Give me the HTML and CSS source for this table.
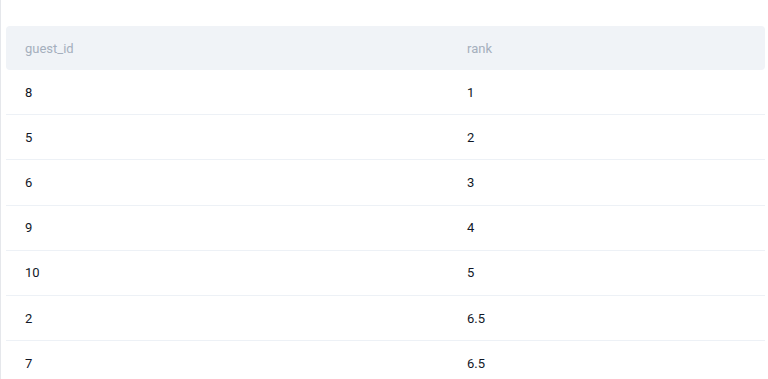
FILE: index.html
```html
<!DOCTYPE html>
<html>
<head>
<meta charset="utf-8">
<link rel="stylesheet" href="styles.css">
</head>
<body>
<div class="frame">
  <table class="grid">
    <thead>
      <tr><th class="c1">guest_id</th><th>rank</th></tr>
    </thead>
    <tbody>
      <tr><td class="c1">8</td><td>1</td></tr>
      <tr><td class="c1">5</td><td>2</td></tr>
      <tr><td class="c1">6</td><td>3</td></tr>
      <tr><td class="c1">9</td><td>4</td></tr>
      <tr><td class="c1">10</td><td>5</td></tr>
      <tr><td class="c1">2</td><td>6.5</td></tr>
      <tr><td class="c1">7</td><td>6.5</td></tr>
    </tbody>
  </table>
</div>
</body>
</html>
```
FILE: styles.css
```css
html, body {
  margin: 0;
  padding: 0;
  background: #ffffff;
  font-family: Roboto, "Noto Sans", sans-serif;
}
.frame {
  border-left: 1px solid #e5e7eb;
  padding: 26px 3px 0 5px;
  height: 379px;
  box-sizing: border-box;
  overflow: hidden;
}
.grid {
  width: 759px;
  border-collapse: separate;
  border-spacing: 0;
  table-layout: fixed;
}
.grid th {
  background: #f0f3f7;
  color: #a5afbd;
  font-weight: 400;
  font-size: 13px;
  text-align: left;
  height: 44px;
  padding: 0 0 0 19px;
}
.grid th:first-child { border-radius: 4px 0 0 4px; }
.grid th:last-child { border-radius: 0 4px 4px 0; }
.grid .c1 { width: 423px; }
.grid td {
  height: 44.2px;
  padding: 0 0 0 19px;
  font-size: 13px;
  color: #111827;
  border-bottom: 1px solid #edf1f6;
}
```
